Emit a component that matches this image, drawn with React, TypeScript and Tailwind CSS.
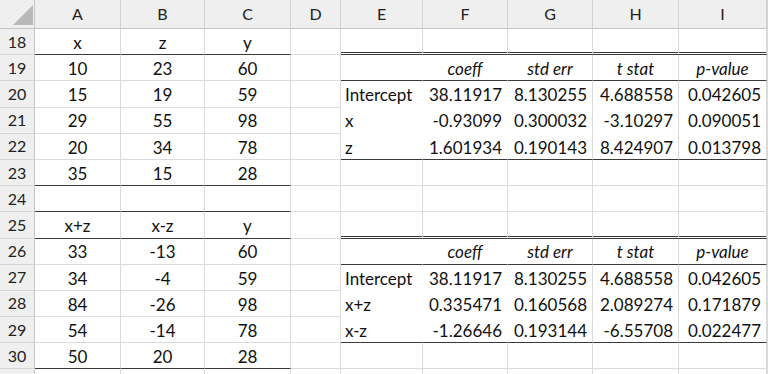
import React from 'react'

type Cell = {
  t?: string
  a?: 'l' | 'c' | 'r'
  i?: boolean
  b?: 'line' | 'double'
  hb?: boolean // hide bottom gridline
  hr?: boolean // hide right gridline
}

const colTemplate = 'grid grid-cols-[35px_86px_84px_86px_50px_82px_85px_85px_86px_88px_1fr]'
const letters = ['A', 'B', 'C', 'D', 'E', 'F', 'G', 'H', 'I', '']

const left: Record<number, string[]> = {
  18: ['x', 'z', 'y'],
  19: ['10', '23', '60'],
  20: ['15', '19', '59'],
  21: ['29', '55', '98'],
  22: ['20', '34', '78'],
  23: ['35', '15', '28'],
  24: ['', '', ''],
  25: ['x+z', 'x-z', 'y'],
  26: ['33', '-13', '60'],
  27: ['34', '-4', '59'],
  28: ['84', '-26', '98'],
  29: ['54', '-14', '78'],
  30: ['50', '20', '28'],
}
const leftLines = [18, 23, 24, 25, 30]

const tables = [
  {
    start: 19,
    rows: [
      ['Intercept', '38.11917', '8.130255', '4.688558', '0.042605'],
      ['x', '-0.93099', '0.300032', '-3.10297', '0.090051'],
      ['z', '1.601934', '0.190143', '8.424907', '0.013798'],
    ],
  },
  {
    start: 26,
    rows: [
      ['Intercept', '38.11917', '8.130255', '4.688558', '0.042605'],
      ['x+z', '0.335471', '0.160568', '2.089274', '0.171879'],
      ['x-z', '-1.26646', '0.193144', '-6.55708', '0.022477'],
    ],
  },
]
const heads = ['', 'coeff', 'std err', 't stat', 'p-value']

function rightCells(r: number): Cell[] {
  for (const tb of tables) {
    const last = tb.start + tb.rows.length
    if (r === tb.start - 1) return heads.map(() => ({ b: 'double' }))
    if (r === tb.start)
      return heads.map((h, k) => ({ t: h, a: 'c', i: true, b: 'line', hr: k < 2 }))
    if (r > tb.start && r <= last) {
      const vals = tb.rows[r - tb.start - 1]
      return vals.map((v, k) => ({
        t: v,
        a: k === 0 ? 'l' : 'r',
        b: r === last ? 'line' : undefined,
        hb: r !== last,
        hr: k < 2,
      }))
    }
  }
  return heads.map(() => ({}))
}

function DataCell({ c }: { c: Cell }) {
  const align = c.a === 'l' ? 'justify-start pl-[4px]' : c.a === 'r' ? 'justify-end pr-[5px]' : 'justify-center'
  const bottom =
    c.b === 'double'
      ? 'border-b-[3px] border-double border-b-[#3a3a3a]'
      : c.b === 'line'
        ? 'border-b border-b-[#3a3a3a]'
        : c.hb
          ? 'border-b border-b-white'
          : 'border-b border-b-[#dadada]'
  return (
    <div
      className={`flex items-center pt-[2px] whitespace-nowrap overflow-hidden border-r ${
        c.hr ? 'border-r-white' : 'border-r-[#dadada]'
      } ${bottom} ${align} ${c.i ? 'italic' : ''}`}
    >
      {c.t}
    </div>
  )
}

export default function App() {
  const rows = Object.keys(left).map(Number)
  return (
    <div className="w-[768px] h-[374px] overflow-hidden bg-white font-['Lato',sans-serif] text-[17px] text-[#111]">
      <div className={`${colTemplate} h-[29px] bg-[#efefef] text-[16px] text-[#222]`}>
        <div className="relative border-r border-b border-[#c4c4c4]">
          <svg className="absolute left-[13px] top-[5px]" width="20" height="20" viewBox="0 0 20 20">
            <polygon points="20,0 20,20 0,20" fill="#b8b8b8" />
          </svg>
        </div>
        {letters.map((l, k) => (
          <div
            key={k}
            className="flex items-end justify-center pb-[2px] border-r border-r-[#d2d2d2] border-b border-b-[#c4c4c4]"
          >
            {l}
          </div>
        ))}
      </div>
      {rows.map((r) => {
        const lc: Cell[] = left[r].map((t) => ({ t, a: 'c', b: leftLines.includes(r) ? 'line' : undefined }))
        const cells: Cell[] = [...lc, {}, ...rightCells(r), {}]
        return (
          <div key={r} className={`${colTemplate} h-[26.2px]`}>
            <div className="flex items-center justify-center bg-[#efefef] text-[16px] text-[#222] border-r border-r-[#c4c4c4] border-b border-b-[#d6d6d6]">
              {r}
            </div>
            {cells.map((c, k) => (
              <DataCell key={k} c={c} />
            ))}
          </div>
        )
      })}
      <div className={`${colTemplate} h-[26px]`}>
        <div className="bg-[#efefef] border-r border-r-[#c4c4c4]" />
        {letters.map((_, k) => (
          <div key={k} className="border-r border-r-[#dadada]" />
        ))}
      </div>
    </div>
  )
}
